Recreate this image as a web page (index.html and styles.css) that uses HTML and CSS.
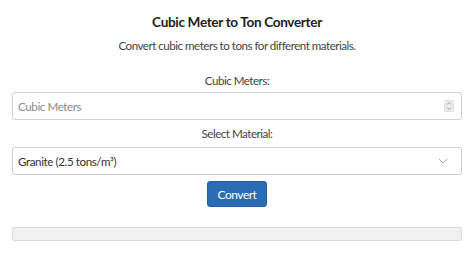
FILE: index.html
```html
<!DOCTYPE html>
<html lang="en">
<head>
<meta charset="utf-8">
<title>Cubic Meter to Ton Converter</title>
<link rel="stylesheet" href="styles.css">
</head>
<body>
<div class="converter">
  <h1 class="title">Cubic Meter to Ton Converter</h1>
  <p class="subtitle">Convert cubic meters to tons for different materials.</p>
  <label class="field-label first" for="cubic">Cubic Meters:</label>
  <div class="field-wrap input-wrap">
    <input class="field" id="cubic" type="number" placeholder="Cubic Meters">
    <svg class="spinner" width="10" height="12" viewBox="0 0 10 12"><rect x="0.5" y="0.5" width="9" height="11" rx="1" fill="#ececec" stroke="#e0e0e0"/><path d="M3 4.5l2-2 2 2M3 7.5l2 2 2-2" fill="none" stroke="#9a9a9a" stroke-width="0.9"/></svg>
  </div>
  <label class="field-label second" for="material">Select Material:</label>
  <div class="field-wrap select-wrap">
    <select class="field select" id="material">
      <option>Granite (2.5 tons/m³)</option>
      <option>Sand (1.6 tons/m³)</option>
      <option>Gravel (1.8 tons/m³)</option>
    </select>
    <svg class="chevron" width="10" height="6" viewBox="0 0 10 6"><path d="M1 1l4 4 4-4" fill="none" stroke="#a8a8a8" stroke-width="1"/></svg>
  </div>
  <div class="actions"><button class="btn">Convert</button></div>
  <div class="result"></div>
</div>
</body>
</html>
```

FILE: styles.css
```css
html, body {
  margin: 0;
  padding: 0;
  background: #fff;
}
body {
  font-family: "Lato", "Open Sans", sans-serif;
  color: #333;
}
.converter {
  padding: 13px 12px 0 12px;
  display: flex;
  flex-direction: column;
}
.title {
  margin: 0;
  text-align: center;
  font-size: 13.6px;
  line-height: 18px;
  font-weight: 700;
  letter-spacing: -0.35px;
  color: #1e1e1e;
}
.subtitle {
  margin: 7px 0 0 0;
  text-align: center;
  font-size: 11.6px;
  line-height: 16px;
  letter-spacing: -0.5px;
  color: #444;
}
.field-label {
  display: block;
  text-align: center;
  font-size: 11.6px;
  line-height: 16px;
  letter-spacing: -0.5px;
  color: #444;
}
.field-label.first {
  margin-top: 19px;
}
.field-label.second {
  margin-top: 6px;
}
.field-wrap {
  position: relative;
}
.input-wrap {
  margin-top: 3px;
}
.select-wrap {
  margin-top: 5px;
}
.field {
  box-sizing: border-box;
  display: block;
  width: 100%;
  height: 28px;
  margin: 0;
  border: 1px solid #cfcfcf;
  border-radius: 3px;
  padding: 0 5px;
  font-family: inherit;
  font-size: 11.6px;
  letter-spacing: -0.4px;
  color: #333;
  background: #fff;
  outline: none;
  -webkit-appearance: none;
  appearance: none;
}
.field::placeholder {
  color: #8a8a8a;
}
.field::-webkit-inner-spin-button,
.field::-webkit-outer-spin-button {
  -webkit-appearance: none;
  margin: 0;
}
.spinner {
  position: absolute;
  right: 8px;
  top: 8px;
}
.chevron {
  position: absolute;
  right: 14px;
  top: 11px;
}
.actions {
  display: flex;
  justify-content: center;
  margin-top: 6px;
}
.btn {
  width: 60px;
  height: 26px;
  background: #2a6db5;
  color: #fff;
  border: 1px solid #23609f;
  border-radius: 3px;
  font-family: inherit;
  font-size: 12px;
  letter-spacing: -0.5px;
  padding: 0;
}
.result {
  margin-top: 20px;
  height: 12px;
  background: #f0f0f0;
  border: 1px solid #dcdcdc;
  border-radius: 2px;
}
```
